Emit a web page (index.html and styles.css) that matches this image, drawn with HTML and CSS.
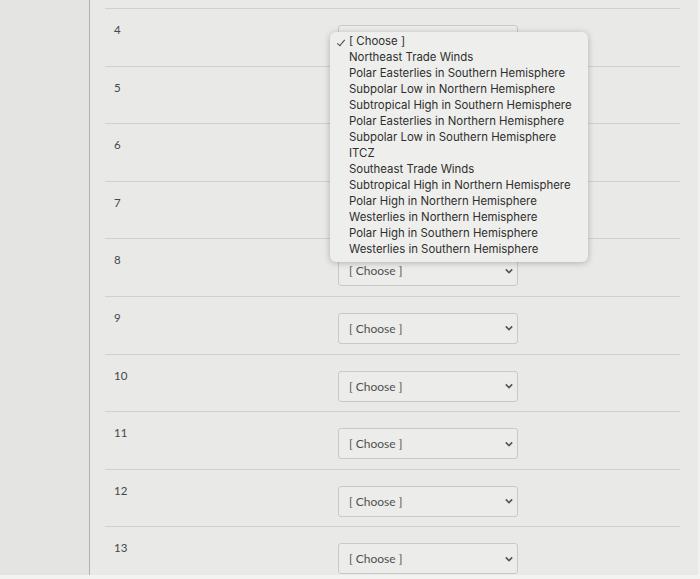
FILE: index.html
```html
<!DOCTYPE html>
<html lang="en">
<head>
  <meta charset="UTF-8">
  <meta name="viewport" content="width=device-width, initial-scale=1.0">
  <title>Wind belts quiz</title>
  <link rel="stylesheet" href="styles.css">
</head>
<body>
  <div class="page">
    <div class="sidebar"></div>
    <div class="main">
      <div class="rows">
        <!-- rows 4-7: their selects sit under the open menu -->
        <div class="row"><span class="num">4</span><div class="select covered"><span>[ Choose ]</span><svg viewBox="0 0 10 6"><polyline points="1,1 5,5 9,1"/></svg></div></div>
        <div class="row"><span class="num">5</span><div class="select covered"><span>[ Choose ]</span><svg viewBox="0 0 10 6"><polyline points="1,1 5,5 9,1"/></svg></div></div>
        <div class="row"><span class="num">6</span><div class="select covered"><span>[ Choose ]</span><svg viewBox="0 0 10 6"><polyline points="1,1 5,5 9,1"/></svg></div></div>
        <div class="row"><span class="num">7</span><div class="select covered"><span>[ Choose ]</span><svg viewBox="0 0 10 6"><polyline points="1,1 5,5 9,1"/></svg></div></div>
        <div class="row"><span class="num">8</span><div class="select"><span>[ Choose ]</span><svg viewBox="0 0 10 6"><polyline points="1,1 5,5 9,1"/></svg></div></div>
        <div class="row"><span class="num">9</span><div class="select"><span>[ Choose ]</span><svg viewBox="0 0 10 6"><polyline points="1,1 5,5 9,1"/></svg></div></div>
        <div class="row"><span class="num">10</span><div class="select"><span>[ Choose ]</span><svg viewBox="0 0 10 6"><polyline points="1,1 5,5 9,1"/></svg></div></div>
        <div class="row"><span class="num">11</span><div class="select"><span>[ Choose ]</span><svg viewBox="0 0 10 6"><polyline points="1,1 5,5 9,1"/></svg></div></div>
        <div class="row"><span class="num">12</span><div class="select"><span>[ Choose ]</span><svg viewBox="0 0 10 6"><polyline points="1,1 5,5 9,1"/></svg></div></div>
        <div class="row"><span class="num">13</span><div class="select"><span>[ Choose ]</span><svg viewBox="0 0 10 6"><polyline points="1,1 5,5 9,1"/></svg></div></div>
      </div>

      <!-- open menu of the select in row 4 -->
      <ul class="menu">
        <li class="checked">[ Choose ]</li>
        <li>Northeast Trade Winds</li>
        <li>Polar Easterlies in Southern Hemisphere</li>
        <li>Subpolar Low in Northern Hemisphere</li>
        <li>Subtropical High in Southern Hemisphere</li>
        <li>Polar Easterlies in Northern Hemisphere</li>
        <li>Subpolar Low in Southern Hemisphere</li>
        <li>ITCZ</li>
        <li>Southeast Trade Winds</li>
        <li>Subtropical High in Northern Hemisphere</li>
        <li>Polar High in Northern Hemisphere</li>
        <li>Westerlies in Northern Hemisphere</li>
        <li>Polar High in Southern Hemisphere</li>
        <li>Westerlies in Southern Hemisphere</li>
      </ul>
    </div>
  </div>
</body>
</html>
```

FILE: styles.css
```css
body {
  margin: 0;
  background-color: #f3f3f1;
  font-family: Lato, "Open Sans", sans-serif;
}
.page {
  display: flex;
  height: 575px;
  overflow: hidden;
  background-color: #e9e9e7;
}
.sidebar {
  width: 89px;
  flex: none;
  background-color: #e4e4e2;
  border-right: 1px solid #b1b1af;
}
.main {
  position: relative;
  flex: 1;
  padding: 8px 18px 0 15px;
  border-right: 2px solid #f2f2f0;
}
.row {
  display: flex;
  align-items: flex-start;
  height: 57.6px;
  border-top: 1px solid #d0d0ce;
  box-sizing: border-box;
}
.num {
  width: 233px;
  padding: 14px 0 0 9px;
  box-sizing: border-box;
  font-size: 11.5px;
  line-height: 14px;
  color: #474747;
}
.select {
  display: flex;
  align-items: center;
  justify-content: space-between;
  width: 180px;
  height: 31px;
  margin-top: 16px;
  padding: 0 4px 0 10px;
  box-sizing: border-box;
  border: 1px solid #c9c9c7;
  border-radius: 3px;
  background-color: #ececea;
  font-size: 12px;
  color: #505050;
}
.select.covered span {
  visibility: hidden;
}
.select svg {
  width: 8px;
  height: 6px;
  fill: none;
  stroke: #555;
  stroke-width: 2;
}
.menu {
  position: absolute;
  left: 240px;
  top: 32px;
  width: 258px;
  margin: 0;
  padding: 1px 0 5px 0;
  list-style: none;
  box-sizing: border-box;
  background-color: #eeeeec;
  border-radius: 6px;
  box-shadow: 0 1px 6px rgba(0, 0, 0, 0.25);
  font-family: Inter, "Liberation Sans", sans-serif;
  font-size: 11.4px;
  line-height: 16px;
  color: #2e2e2e;
}
.menu li {
  padding-left: 19px;
}
.menu li.checked {
  position: relative;
}
.menu li.checked::before {
  content: "";
  position: absolute;
  left: 9px;
  top: 5px;
  width: 3px;
  height: 7px;
  border-right: 1.3px solid #444;
  border-bottom: 1.3px solid #444;
  transform: rotate(40deg);
}
```
